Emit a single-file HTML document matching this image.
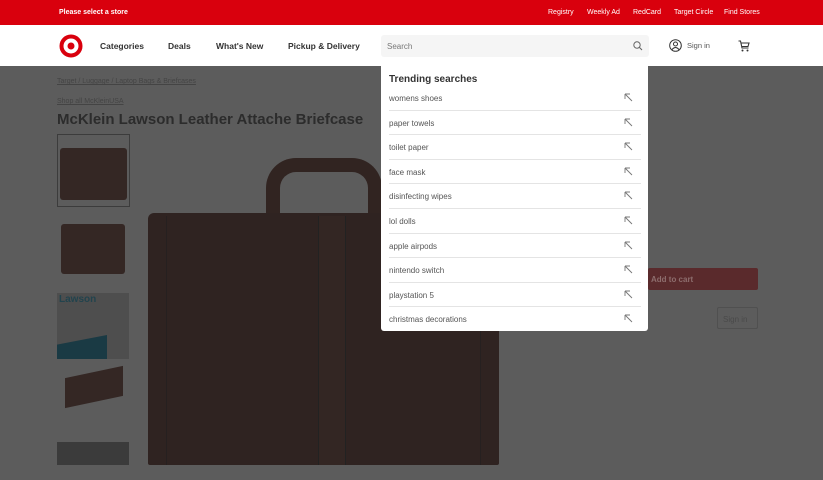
<!DOCTYPE html>
<html><head><style>
*{margin:0;padding:0;box-sizing:border-box}
body{width:823px;height:480px;overflow:hidden;background:#5c5c5c;font-family:"Liberation Sans",sans-serif;position:relative}
.a{position:absolute}
.top{left:0;top:0;width:823px;height:25px;background:#d9000d;color:#fff;font-size:7px}
.top span{position:absolute;top:9px}
.hdr{left:0;top:25px;width:823px;height:41px;background:#fff}
.nav{font-size:8.5px;font-weight:bold;color:#333;top:41px}
.dd{left:381px;top:66px;width:267px;height:265px;background:#fff;border-radius:0 0 3px 3px}
.row{position:absolute;left:8px;width:252px;height:24.6px;border-bottom:1px solid #e4e4e4;font-size:8px;color:#555}
.row span{position:absolute;top:8px;left:0}
.row svg{position:absolute;right:8px;top:7px}
</style></head><body>
<div class="a top"><span style="left:59px;font-weight:bold">Please select a store</span>
<span style="left:548px">Registry</span><span style="left:587px">Weekly Ad</span><span style="left:633px">RedCard</span><span style="left:674px">Target Circle</span><span style="left:724px">Find Stores</span></div>
<div class="a hdr"></div>
<svg class="a" style="left:59px;top:34px" width="24" height="24" viewBox="0 0 24 24"><circle cx="12" cy="12" r="9.5" fill="none" stroke="#d9000d" stroke-width="4"/><circle cx="12" cy="12" r="3.5" fill="#d9000d"/></svg>
<div class="a nav" style="left:100px">Categories</div>
<div class="a nav" style="left:168px">Deals</div>
<div class="a nav" style="left:216px">What's New</div>
<div class="a nav" style="left:288px">Pickup &amp; Delivery</div>
<div class="a" style="left:381px;top:35px;width:268px;height:22px;background:#f5f5f5;border-radius:3px;font-size:8px;color:#777;padding:7px 6px">Search</div>
<svg class="a" style="left:633px;top:41px" width="10" height="10" viewBox="0 0 10 10"><circle cx="4" cy="4" r="3.2" fill="none" stroke="#666" stroke-width="1"/><path d="M6.4 6.4L9 9" stroke="#666" stroke-width="1.1"/></svg>
<svg class="a" style="left:669px;top:39px" width="13" height="13" viewBox="0 0 13 13"><circle cx="6.5" cy="6.5" r="5.8" fill="none" stroke="#333" stroke-width="1"/><circle cx="6.5" cy="5" r="2" fill="none" stroke="#333"/><path d="M3 10.5Q6.5 6.5 10 10.5" fill="none" stroke="#333"/></svg>
<div class="a" style="left:687px;top:41px;font-size:7.5px;color:#555">Sign in</div>
<svg class="a" style="left:738px;top:40px" width="12" height="12" viewBox="0 0 12 12"><path d="M0.5 1h2l1.5 7h6.5M3 3h8l-1 3.5H3.7" fill="none" stroke="#333" stroke-width="1.1"/><circle cx="4.5" cy="10.5" r="1" fill="#333"/><circle cx="9.5" cy="10.5" r="1" fill="#333"/></svg>

<div class="a" style="left:57px;top:78px;font-size:7px;color:#444;text-decoration:underline">Target / Luggage / Laptop Bags &amp; Briefcases</div>
<div class="a" style="left:57px;top:98px;font-size:7px;color:#444;text-decoration:underline">Shop all McKleinUSA</div>
<div class="a" style="left:57px;top:111px;font-size:15px;font-weight:bold;color:#2c2c2c">McKlein Lawson Leather Attache Briefcase</div>
<div class="a" style="left:57px;top:134px;width:73px;height:73px;border:1px solid #3c3c3c"></div>
<div class="a" style="left:60px;top:148px;width:67px;height:52px;background:#33262300;background:#342724;border-radius:3px"></div>
<div class="a" style="left:61px;top:224px;width:64px;height:50px;background:#342724;border-radius:3px"></div>
<div class="a" style="left:57px;top:293px;width:72px;height:66px;background:#4e4e4e"></div>
<div class="a" style="left:57px;top:335px;width:50px;height:24px;background:#1a3a44;clip-path:polygon(0 40%,100% 0,100% 100%,0 100%)"></div>
<div class="a" style="left:59px;top:294px;font-size:10px;color:#22434d;font-weight:bold">Lawson</div>
<div class="a" style="left:65px;top:372px;width:58px;height:30px;background:#342724;transform:skewY(-12deg)"></div>
<div class="a" style="left:57px;top:442px;width:72px;height:23px;background:#3b3b3b"></div>
<div class="a" style="left:266px;top:158px;width:116px;height:70px;border:14px solid #312421;border-bottom:none;border-radius:30px 30px 0 0"></div>
<div class="a" style="left:148px;top:213px;width:351px;height:252px;background:#2f2321;border-radius:6px 6px 2px 2px"></div>
<div class="a" style="left:318px;top:216px;width:28px;height:249px;background:#332623;border-left:1px solid #222;border-right:1px solid #222"></div>
<div class="a" style="left:166px;top:216px;width:1px;height:249px;background:#262020"></div>
<div class="a" style="left:480px;top:216px;width:1px;height:249px;background:#262020"></div>
<div class="a" style="left:648px;top:268px;width:110px;height:22px;background:#5a2a2c;border-radius:2px;font-size:8px;color:#8d6d6d;font-weight:bold;padding:7px 3px">Add to cart</div>
<div class="a" style="left:717px;top:307px;width:41px;height:22px;border:1px solid #505050;border-radius:2px;font-size:8px;color:#4a4a4a;padding:7px 5px">Sign in</div>

<div class="a dd">
<div class="a" style="left:8px;top:8px;font-size:10px;font-weight:bold;color:#333">Trending searches</div>
<div id="rows"></div>
</div>
<script>
var t=["womens shoes","paper towels","toilet paper","face mask","disinfecting wipes","lol dolls","apple airpods","nintendo switch","playstation 5","christmas decorations"];
var h="";
for(var i=0;i<t.length;i++){h+='<div class="row" style="top:'+(20+i*24.6)+'px;'+(i==9?'border:none':'')+'"><span>'+t[i]+'</span><svg width="9" height="9" viewBox="0 0 9 9"><path d="M1 1L8 8M1 1h5M1 1v5" fill="none" stroke="#777" stroke-width="0.9"/></svg></div>'}
document.getElementById("rows").innerHTML=h;
</script>
</body></html>
